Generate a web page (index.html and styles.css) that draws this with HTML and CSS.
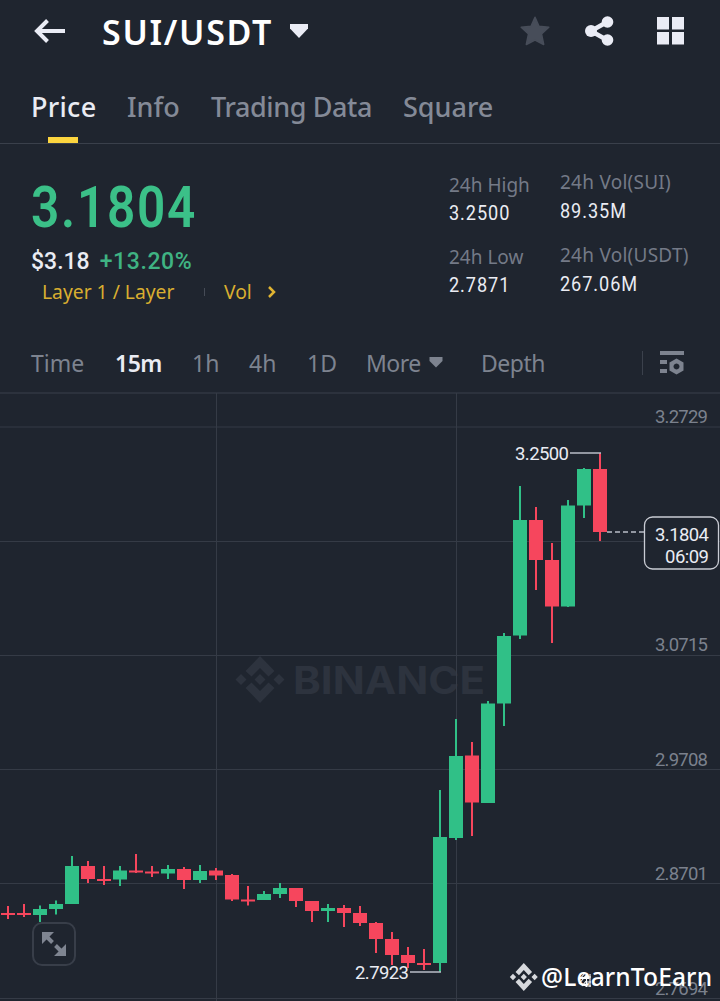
FILE: index.html
```html
<!DOCTYPE html>
<html lang="en">
<head>
<meta charset="utf-8">
<title>SUI/USDT</title>
<link rel="stylesheet" href="styles.css">
</head>
<body>
<header class="header">
  <svg class="back" width="34" height="28" viewBox="0 0 34 28"><path d="M16.500 3.500 6 14l10.500 10.500M6.500 14H34"/></svg>
  <h1 class="pair">SUI/USDT</h1>
  <svg class="pair-arrow" width="18" height="14" viewBox="0 0 18 14"><path d="M0 0h18v4.500L9 14 0 4.500z"/></svg>
  <svg class="star" width="30" height="30" viewBox="0 0 30 30"><path d="M15 1.200l4 9 9.800 1-7.300 6.700 2.200 10.600L15 24l-8.700 4.500 2.200-10.600-7.300-6.700 9.800-1z"/></svg>
  <svg class="share" width="30" height="30" viewBox="0 0 30 30"><path d="M22 6 6 15l16 9"/><circle cx="22.500" cy="6" r="5.800"/><circle cx="6" cy="15" r="6"/><circle cx="22.500" cy="24" r="5.800"/></svg>
  <svg class="apps" width="28" height="28" viewBox="0 0 28 28"><path d="M0 0h12v12.500H0zM15 0h12v12.500H15zM0 15h12v12.500H0zM15 15h12v12.500H15z"/></svg>
</header>

<nav class="tabs">
  <a class="tab tab-active">Price</a>
  <a class="tab">Info</a>
  <a class="tab tab-trading">Trading Data</a>
  <a class="tab">Square</a>
</nav>

<section class="summary">
  <div class="quote">
    <div class="last"><span class="last-num">3.1804</span></div>
    <div class="fiat"><span class="usd">$3.18</span><span class="change">+13.20%</span></div>
    <div class="tags"><span class="tag-layer">Layer 1 / Layer</span><i class="tag-sep"></i><span class="tag-vol">Vol</span><svg width="10" height="14" viewBox="0 0 10 14"><path d="M2 2l5 5-5 5"/></svg></div>
  </div>
  <dl class="stats">
    <dt>24h High</dt><dd>3.2500</dd>
    <dt>24h Low</dt><dd>2.7871</dd>
  </dl>
  <dl class="stats stats-vol">
    <dt>24h Vol(SUI)</dt><dd>89.35M</dd>
    <dt>24h Vol(USDT)</dt><dd>267.06M</dd>
  </dl>
</section>

<div class="intervals">
  <span>Time</span>
  <span class="interval-active">15m</span>
  <span>1h</span>
  <span>4h</span>
  <span>1D</span>
  <span class="more">More<svg width="14" height="11" viewBox="0 0 14 11"><path d="M.5 0h13v4L7 10.500.5 4z"/></svg></span>
  <span class="depth">Depth</span>
  <svg class="settings" width="25" height="25" viewBox="0 0 25 25"><path d="M0 1h24v4H0zM0 10h7v4H0zM0 19h7v4H0z"/><path fill-rule="evenodd" d="M16.500 8.500l7 4v8l-7 4-7-4v-8zM16.500 13.500a3 3 0 1 0 .01 0z"/></svg>
</div>

<svg class="chart" width="720" height="609" viewBox="0 392 720 609">
  <defs>
    <g id="mark">
      <path d="M-14.500 -8.500 0 -23.500 14.500 -8.500 8.500 -3 0 -11.500 -8.500 -3zM-14.500 8.500 0 23.500 14.500 8.500 8.500 3 0 11.500 -8.500 3z"/>
      <path d="M0 -5.500 5.500 0 0 5.500 -5.500 0zM-19 -5.500 -13.500 0 -19 5.500 -24.500 0zM19 -5.500 24.500 0 19 5.500 13.500 0z"/>
    </g>
  </defs>
  <path class="grid grid-top" d="M0 393H720"/>
  <g class="brand">
    <use href="#mark" x="260" y="679.500"/>
    <text x="293" y="693.500" textLength="192" lengthAdjust="spacingAndGlyphs">BINANCE</text>
  </g>
  <path class="grid" d="M0 427H720M0 541.500H720M0 655.500H720M0 769.500H720M0 883.500H720M0 998.500H720M216.500 393V1001M456.500 393V1001"/>
  <g class="axis">
    <text x="655" y="423" textLength="53">3.2729</text>
    <text x="655" y="651" textLength="53">3.0715</text>
    <text x="655" y="766" textLength="53">2.9708</text>
    <text x="655" y="880" textLength="53">2.8701</text>
    <text x="655" y="995" textLength="53">2.7694</text>
  </g>
  <g class="up">
    <path class="wick" d="M40 905.500V922M56 900.500V914.500M72 856V904M120 866V886M168 865V879M200 865V883M264 891V900M280 883V898M328 904V922M440 790V972M456 719V840M488 701V803M504 633V726M520 486V639M568 500V607M584 468V518"/>
    <path class="candle" d="M40 909V915M56 904V909M72 866V904M120 870.500V879.500M168 869V873.500M200 871V880M264 894V900M280 888V894M328 908V911M440 837V963M456 756V838M488 703.500V803M504 636V703.500M520 520V635.500M568 505.500V606.500M584 469V505.500"/>
  </g>
  <g class="down">
    <path class="wick" d="M8 906V919M24 904V917M88 861V883M104 866V885M136 854V873M152 866V877M184 867V889M216 868V880M232 874V901M248 886V905.500M296 888V907M312 901V922M344 905V927M360 906V926M376 922V953M392 932V965M408 947V968M424 949V970M472 742V836M536 507V590M552 543V643M600 453V541"/>
    <path class="candle" d="M8 913V915M24 913V915M88 866V879M104 879V881M136 870.500V872.500M152 871.500V873.500M184 869V880M216 870.500V875.500M232 875V899.500M248 899.500V901.500M296 888V901M312 901V911M344 908V913M360 913V923M376 923V939M392 939V955M408 955V963M424 963V965M472 755.500V802.500M536 520V560M552 560V606.500M600 469V532"/>
  </g>
  <path class="leader" d="M570 453H601M410 972H441"/>
  <path class="leader dash" d="M607 532H644"/>
  <g class="extreme">
    <text x="515" y="460" textLength="54">3.2500</text>
    <text x="355" y="979" textLength="54">2.7923</text>
  </g>
  <rect class="now-box" x="644.500" y="517" width="74" height="52" rx="8"/>
  <g class="extreme">
    <text x="655" y="541" textLength="54">3.1804</text>
    <text x="665" y="563" textLength="44">06:09</text>
  </g>
  <rect class="expand-box" x="33" y="923" width="42" height="42" rx="9"/>
  <path class="expand" d="M42 932h12L42 944zM66 956H54l12-12z"/>
  <path class="expand-shaft" d="M46 936l6.500 6.500M62 952l-6.500-6.500"/>
  <g class="credit">
    <use href="#mark" transform="translate(523.800 977) scale(.57 .6)"/>
    <text x="541" y="985.500" textLength="171">@LearnToEarn</text>
    <path class="scribble" d="M579 980l6-7M579 984l8-10M582 986l5-6M586.500 974v13M590 974v13M584 977h7M585 982h6M585 986h6"/>
  </g>
</svg>
</body>
</html>
```
FILE: styles.css
```css
* { box-sizing: border-box; }

body {
  margin: 0;
  width: 720px;
  height: 1001px;
  overflow: hidden;
  background: #1f252f;
  color: #eaecf3;
  font-family: "Noto Sans", sans-serif;
}

.header {
  display: flex;
  align-items: center;
  height: 63px;
  padding: 0 0 2px 31px;
  fill: #eaecf5;
}
.back { fill: none; stroke: #eaecf5; stroke-width: 4; }
.pair {
  width: 186px;
  margin: 2px 0 0 37px;
  padding-top: 2px;
  color: #fff;
  font-size: 34px;
  font-weight: 650;
  line-height: 61px;
  letter-spacing: 1.7px;
}
.pair-arrow { margin-left: 2px; }
.star { margin-left: 212px; fill: #474d59; stroke: #474d59; stroke-width: 1.5; stroke-linejoin: round; }
.share { margin-left: 35px; }
.share path { fill: none; stroke: #eaecf5; stroke-width: 4.5; }
.apps { margin-left: 42px; }

.tabs {
  display: grid;
  grid-template-columns: 96px 84px 192px 120px;
  height: 81px;
  padding-left: 31px;
  border-bottom: 1px solid #3a404b;
  color: #848a97;
  font-size: 27px;
  font-weight: 500;
  line-height: 87px;
}
.tab { height: 80px; white-space: nowrap; }
.tab-trading { letter-spacing: -.4px; }
.tab-active { position: relative; color: #eaecf3; letter-spacing: .3px; }
.tab-active::after {
  content: "";
  position: absolute;
  left: 17px;
  bottom: 0;
  width: 30px;
  height: 6px;
  background: #fcd53f;
}

.summary {
  display: grid;
  grid-template-columns: 418px 111px 150px;
  height: 191px;
  padding-left: 31px;
}
.quote { padding-top: 37px; font-family: Roboto, sans-serif; }
.last { height: 66px; color: #3bc088; font-size: 57px; font-weight: 600; line-height: 54px; }
.last-num { display: inline-block; transform: scaleX(.87); transform-origin: left; letter-spacing: 2px; }
.fiat { display: flex; gap: 10px; font-size: 23px; font-weight: 500; line-height: 30px; }
.change { color: #3fb383; letter-spacing: .6px; }
.tags {
  display: flex;
  align-items: center;
  padding-left: 11px;
  color: #d9ae30;
  font-family: "Noto Sans", sans-serif;
  font-size: 19.3px;
  line-height: 30px;
}
.tag-layer { width: 162px; white-space: nowrap; }
.tag-sep { width: 1px; height: 8px; background: #454b56; }
.tag-vol { width: 43px; margin-left: 19px; }
.tags svg { fill: none; stroke: #e0b432; stroke-width: 2.5; }

.stats { margin: 0; padding-top: 27px; white-space: nowrap; }
.stats dt { color: #747a87; font-size: 19px; line-height: 28px; }
.stats dd {
  width: max-content;
  margin: 0 0 16px;
  padding-top: 1px;
  font: 400 19.5px/27px Roboto, sans-serif;
  letter-spacing: 1px;
  transform: scaleX(.93);
  transform-origin: left;
}
.stats-vol { padding-top: 24px; }
.stats-vol dt { letter-spacing: .25px; }
.stats-vol dd { padding-top: 2px; line-height: 27px; }

.intervals {
  display: grid;
  grid-template-columns: 84px 77px 57px 58px 59px 115px 162px auto;
  height: 57px;
  padding-left: 31px;
  color: #7d838f;
  font-size: 23px;
  line-height: 57px;
}
.interval-active { color: #eaecf3; font-weight: 600; letter-spacing: -.5px; }
.more { letter-spacing: -.5px; }
.more svg { margin-left: 8px; fill: #7d838f; vertical-align: 4px; }
.depth { border-right: 1px solid #3b414c; height: 24px; margin-top: 16px; line-height: 25px; letter-spacing: -.5px; }
.settings { margin: 15px 0 0 17px; fill: #7d838f; }

.chart { display: block; font-family: Roboto, sans-serif; }
.grid { stroke: #353b46; stroke-width: 1; }
.grid-top { stroke: #2c323d; stroke-width: 2; }
.brand { fill: #2d333e; font: 700 38px Inter, sans-serif; }
.axis { fill: #7b818d; font-size: 18.5px; }
.up { stroke: #30c087; }
.down { stroke: #f6465d; }
.wick { stroke-width: 2; }
.candle { stroke-width: 14; }
.leader { fill: none; stroke: #b9bdc7; stroke-width: 1.5; }
.dash { stroke-dasharray: 5 3; }
.extreme { fill: #eaecf3; font-size: 18.5px; }
.now-box { fill: #1f252f; stroke: #c9ccd4; stroke-width: 1.3; }
.expand-box { fill: #1f252f; stroke: #383e49; stroke-width: 2; }
.expand { fill: #7f8591; }
.expand-shaft { stroke: #7f8591; stroke-width: 4; }
.credit { fill: #fff; font: 500 24.5px "Noto Sans", sans-serif; }
.credit use { fill: #d7d9dd; }
.scribble { fill: none; stroke: #fff; stroke-width: 1.1; }
```
